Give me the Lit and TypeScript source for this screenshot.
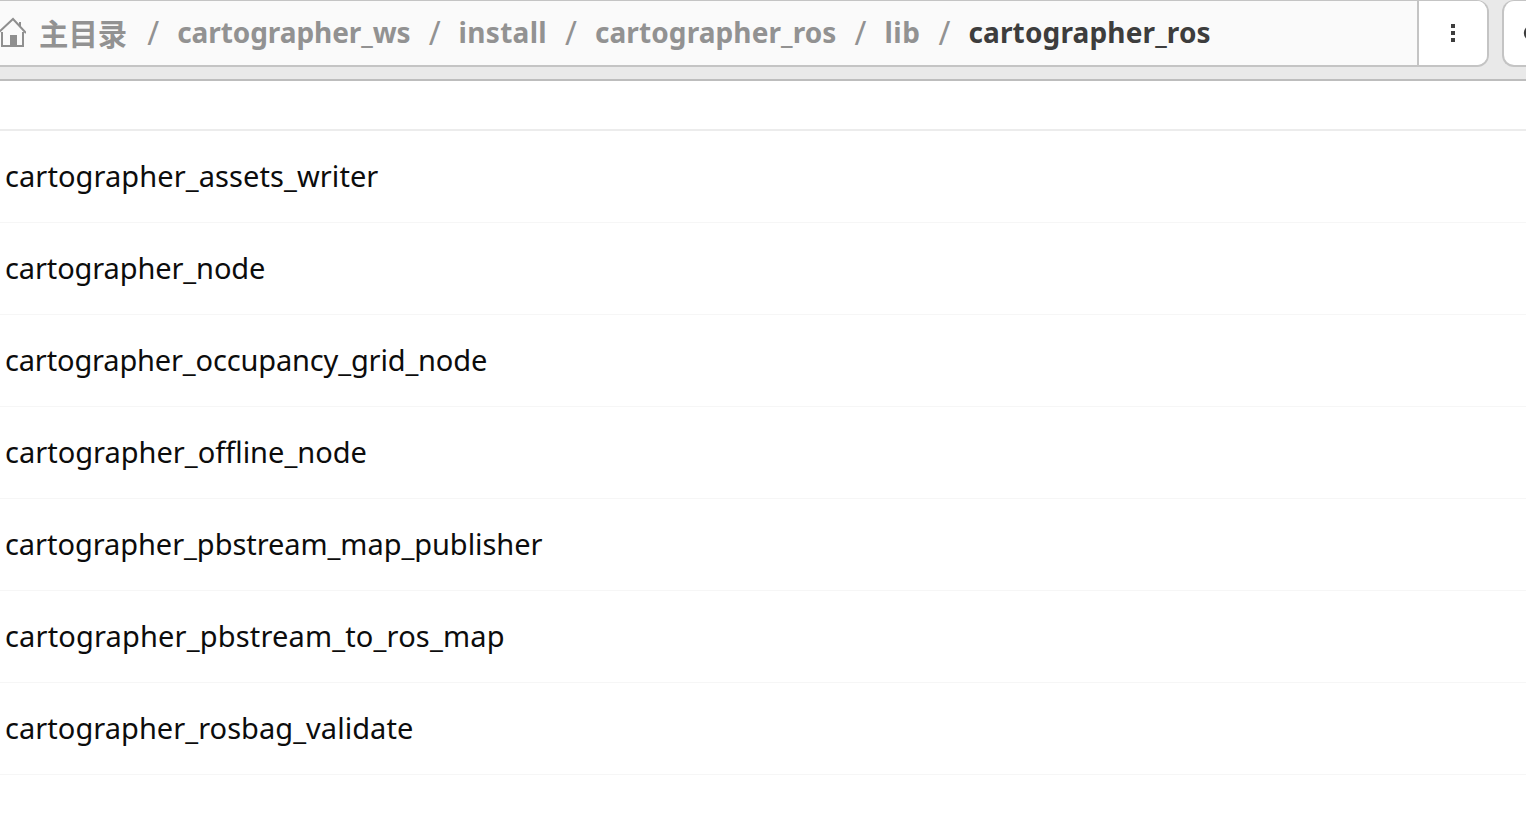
import { LitElement, html, css } from "lit";
import { customElement } from "lit/decorators.js";

const FILES = [
  { name: "cartographer_assets_writer", ls: 0.08 },
  { name: "cartographer_node", ls: -0.12 },
  { name: "cartographer_occupancy_grid_node", ls: -0.16 },
  { name: "cartographer_offline_node", ls: 0 },
  { name: "cartographer_pbstream_map_publisher", ls: -0.06 },
  { name: "cartographer_pbstream_to_ros_map", ls: 0.16 },
  { name: "cartographer_rosbag_validate", ls: 0.04 },
];
const CRUMBS = [
  { name: "cartographer_ws", ls: -0.07 },
  { name: "install", ls: 0.3 },
  { name: "cartographer_ros", ls: 0.1 },
  { name: "lib", ls: 0.5 },
];

@customElement("app-root")
export class AppRoot extends LitElement {
  static styles = css`
    :host {
      display: block;
      width: 1526px;
      height: 813px;
      overflow: hidden;
      background: #fff;
      font-family: "Noto Sans", "Noto Sans CJK SC", sans-serif;
    }
    .toolbar {
      height: 79px;
      background: #e9e9e9;
      border-bottom: 2px solid #bdbdbd;
      display: flex;
      align-items: flex-start;
      gap: 13px;
    }
    .path {
      flex: none;
      width: 1489px;
      height: 67px;
      box-sizing: border-box;
      display: flex;
      background: #fafafa;
      border: 2px solid #c4c4c4;
      border-left: none;
      border-top-width: 1px;
      border-radius: 0 12px 12px 0;
      overflow: hidden;
    }
    .crumbs {
      flex: 1;
      display: flex;
      align-items: center;
      gap: 19px;
      padding-bottom: 2px;
      font-size: 28px;
      font-weight: 700;
      color: #929292;
      white-space: nowrap;
    }
    .home {
      width: 26px;
      height: 30px;
      margin-right: -6px;
      flex: none;
    }
    .root {
      font-size: 29.4px;
      margin-right: 2px;
    }
    .sep {
      font-weight: 400;
      font-size: 32px;
      width: 10px;
      display: flex;
      justify-content: center;
    }
    .current {
      color: #3d3d3d;
      letter-spacing: 0.15px;
    }
    .menu {
      flex: none;
      width: 70px;
      box-sizing: border-box;
      background: #fff;
      border-left: 2px solid #c4c4c4;
      display: flex;
      align-items: center;
      justify-content: center;
    }
    .menu svg {
      width: 6px;
      height: 22px;
    }
    .next {
      flex: 1;
      height: 67px;
      box-sizing: border-box;
      background: #fff;
      border: 2px solid #c4c4c4;
      border-right: none;
      border-top-width: 1px;
      border-radius: 12px 0 0 12px;
      overflow: hidden;
      display: flex;
      align-items: center;
      padding-left: 19px;
    }
    .next svg {
      flex: none;
      width: 18px;
      height: 18px;
    }
    .head {
      height: 48px;
      border-bottom: 2px solid #ececec;
    }
    .row {
      box-sizing: border-box;
      height: 92px;
      padding: 0 0 2px 5px;
      border-bottom: 1px solid #f6f6f6;
      display: flex;
      align-items: center;
      font-size: 29px;
      color: #0c0c0c;
      white-space: nowrap;
    }
  `;

  render() {
    return html`
      <div class="toolbar">
        <div class="path">
          <div class="crumbs">
            <svg class="home" viewBox="0 0 26 30" fill="none" stroke="#8f8f8f" stroke-width="2">
              <path d="M-2 16 L13 2 L26 16" />
              <path d="M2 15 V29 H23 V15" />
              <path d="M10 29 V18 H17 V29" fill="#8f8f8f" stroke="none" />
              <path d="M20 5 V10" />
            </svg>
            <span class="root">主目录</span>
            ${CRUMBS.map(
              (c) => html`<span class="sep">/</span><span style="letter-spacing:${c.ls}px">${c.name}</span>`
            )}
            <span class="sep">/</span>
            <span class="current">cartographer_ros</span>
          </div>
          <div class="menu">
            <svg viewBox="0 0 6 22" fill="#3d3d3d">
              <rect x="1" y="2" width="4" height="4" />
              <rect x="1" y="9" width="4" height="4" />
              <rect x="1" y="16" width="4" height="4" />
            </svg>
          </div>
        </div>
        <div class="next">
          <svg viewBox="0 0 18 18" fill="none" stroke="#3d3d3d" stroke-width="2.4">
            <circle cx="9" cy="9" r="7" />
          </svg>
        </div>
      </div>
      <div class="head"></div>
      ${FILES.map(
        (f) => html`<div class="row" style="letter-spacing:${f.ls}px">${f.name}</div>`
      )}
    `;
  }
}
